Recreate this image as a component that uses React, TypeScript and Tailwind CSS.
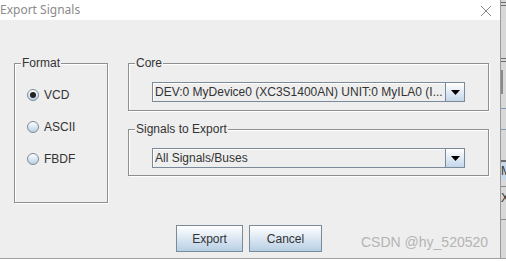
import React from 'react'

const font = { fontFamily: '"Liberation Sans", Arial, sans-serif' }

function GroupBox({ title, className, children }: { title: string; className: string; children?: React.ReactNode }) {
  return (
    <div
      className={`relative border border-[#8e8f8f] shadow-[inset_1px_1px_0_#ffffff,1px_1px_0_#ffffff] ${className}`}
    >
      <span className="absolute left-[6px] top-[-8px] bg-[#eeeeee] px-px text-[12px] leading-[14px] text-[#333333]">
        {title}
      </span>
      {children}
    </div>
  )
}

function Radio({ label, checked }: { label: string; checked?: boolean }) {
  return (
    <div className="flex h-[14px] items-center gap-[5px]">
      <span className="flex h-[12px] w-[12px] items-center justify-center rounded-full border border-[#7a8a99] bg-gradient-to-b from-[#ffffff] to-[#b8cfe5]">
        {checked && <span className="h-[6px] w-[6px] rounded-full bg-[#222222]" />}
      </span>
      <span className="text-[12px] leading-[14px] text-[#333333]">{label}</span>
    </div>
  )
}

function Combo({ value }: { value: string }) {
  return (
    <div className="flex h-[20px] w-[313px] border border-[#7a8a99] bg-[#eeeeee]">
      <div className="flex flex-1 items-center overflow-hidden whitespace-nowrap border-r border-[#7a8a99] pl-[2px] text-[12px] text-[#333333] shadow-[inset_1px_1px_0_#ffffff]">
        {value}
      </div>
      <div className="flex w-[18px] items-center justify-center bg-gradient-to-b from-[#ffffff] to-[#c4d6ea]">
        <svg width="9" height="5" viewBox="0 0 9 5">
          <path d="M0 0H9L4.5 5Z" fill="#000" />
        </svg>
      </div>
    </div>
  )
}

function Button({ label, w }: { label: string; w: string }) {
  return (
    <button
      className={`flex h-[27px] ${w} items-center justify-center border border-[#7a8a99] bg-gradient-to-b from-[#ffffff] to-[#b8cfe5] text-[12px] text-[#333333]`}
    >
      {label}
    </button>
  )
}

export default function App() {
  return (
    <div className="relative flex h-[261px] w-[506px] flex-col overflow-hidden bg-[#eeeeee]" style={font}>
      <div className="flex h-[258px]">
        {/* dialog */}
        <div className="flex w-[500px] flex-col">
          <div className="flex h-[20px] items-center justify-between bg-white">
            <span
              className="text-[12px] leading-[14px] text-[#8a8a8a]"
              style={{ fontFamily: '"Noto Sans", "Noto Sans CJK SC", sans-serif' }}
            >
              Export Signals
            </span>
            <svg width="12" height="12" viewBox="0 0 12 12" className="mr-[8px] mt-[1px]">
              <path d="M1 1L11 11M11 1L1 11" stroke="#8a8a8a" strokeWidth="1" />
            </svg>
          </div>
          <div className="flex flex-1 flex-col bg-[#eeeeee]">
            <div className="flex gap-[20px] pl-[14px] pt-[43px]">
              <GroupBox title="Format" className="h-[140px] w-[94px]">
                <div className="flex flex-col gap-[18px] pl-[12px] pt-[24px]">
                  <Radio label="VCD" checked />
                  <Radio label="ASCII" />
                  <Radio label="FBDF" />
                </div>
              </GroupBox>
              <div className="flex flex-col gap-[18px]">
                <GroupBox title="Core" className="h-[48px] w-[361px]">
                  <div className="pl-[23px] pt-[18px]">
                    <Combo value="DEV:0 MyDevice0 (XC3S1400AN) UNIT:0 MyILA0 (I..." />
                  </div>
                </GroupBox>
                <GroupBox title="Signals to Export" className="h-[47px] w-[361px]">
                  <div className="pl-[23px] pt-[18px]">
                    <Combo value="All Signals/Buses" />
                  </div>
                </GroupBox>
              </div>
            </div>
            <div className="flex gap-[6px] pl-[176px] pt-[22px]">
              <Button label="Export" w="w-[67px]" />
              <Button label="Cancel" w="w-[73px]" />
            </div>
          </div>
        </div>
        {/* window behind */}
        <div className="flex w-[6px] flex-col border-l border-[#9a9a9a] bg-[#d8d8d8]">
          <div className="mt-[2px] h-px bg-[#6b6b6b]" />
          <div className="mt-[2px] h-px bg-[#6b6b6b]" />
          <div className="mt-[52px] h-px bg-[#6b6b6b]" />
          <div className="mt-[2px] h-px bg-[#6b6b6b]" />
          <div className="mt-[8px] h-[24px] w-[2px] bg-[#8a8a8a]" />
          <div className="mt-[14px] h-px bg-[#7b9ac0]" />
          <div className="mt-[20px] h-px bg-[#7b9ac0]" />
          <div className="mt-[30px] h-[2px] bg-[#6b6b6b]" />
          <div className="h-[18px] bg-[#c8d8e8] text-[12px] leading-[18px] text-[#333]">M</div>
          <div className="mt-[6px] h-px bg-[#8a8a8a]" />
          <div className="mt-[4px] text-[12px] leading-[14px] text-[#333]">X</div>
          <div className="mt-[14px] h-px bg-[#8a8a8a]" />
        </div>
      </div>
      <div className="h-[3px] border-t border-[#a0a0a0] bg-white" />
      <span className="absolute left-[361px] top-[234px] text-[14px] leading-[16px] text-[#b4b4b4]">
        CSDN @hy_520520
      </span>
    </div>
  )
}
